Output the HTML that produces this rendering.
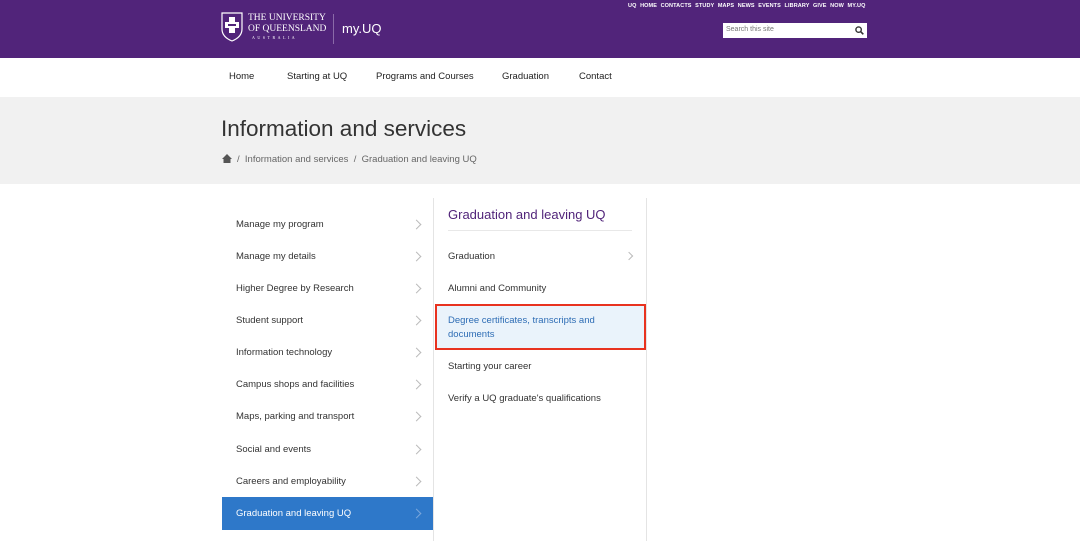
<!DOCTYPE html>
<html><head><meta charset="utf-8"><style>
*{margin:0;padding:0;box-sizing:border-box}
body{width:1080px;height:541px;overflow:hidden;background:#fff;font-family:"Liberation Sans",Arial,sans-serif;position:relative}
.hdr{position:absolute;left:0;top:0;width:1080px;height:58px;background:#51247a}
.top{position:absolute;top:3px;left:628px;font-size:5.5px;color:#fff;font-weight:bold;letter-spacing:0.1px;white-space:nowrap;word-spacing:2px}
.search{position:absolute;left:723px;top:23px;width:144px;height:15px;background:#fff;font-size:7px;color:#777;padding:3px 3px}
.nav{position:absolute;top:71px;font-size:9.5px;color:#222}
.band{position:absolute;top:97px;left:0;width:1080px;height:87px;background:#f1f1f1}
.t{position:absolute;left:221px;top:116px;font-size:22.5px;color:#333}
.bc{position:absolute;left:246px;top:154px;font-size:9.5px;color:#666;white-space:nowrap}
.li{position:absolute;left:222px;width:211px;height:32px;font-size:9.5px;color:#333;padding:11px 14px}
.li .c{position:absolute;right:13px;top:13px;width:7px;height:7px;border-right:1px solid #bbb;border-top:1px solid #bbb;transform:rotate(45deg)}
.act{background:#2e78c9;color:#fff}
.act .c{border-color:#7aa6db}
.col{position:absolute;left:433px;top:198px;width:214px;height:343px;border-left:1px solid #e4e4e4;border-right:1px solid #e4e4e4}
.ri{position:absolute;left:448px;font-size:9.5px;color:#333}
</style></head><body>
<div class="hdr">
<svg style="position:absolute;left:221px;top:12px" width="22" height="30" viewBox="0 0 22 30"><path d="M1 1H21V17Q21 25 11 29Q1 25 1 17Z" fill="none" stroke="#fff" stroke-width="1.2"/><path d="M8 5H14V10H18V16H14V21H8V16H4V10H8Z" fill="#fff"/><rect x="7" y="12" width="8" height="2" fill="#51247a"/></svg>
<div style="position:absolute;left:248px;top:13px;color:#fff;font-family:'Liberation Serif',serif;font-size:9.5px;line-height:11px;white-space:nowrap">THE UNIVERSITY<br>OF QUEENSLAND<div style="font-size:4px;letter-spacing:2.5px;line-height:6px;margin-left:4px">AUSTRALIA</div></div>
<div style="position:absolute;left:333px;top:14px;width:1px;height:30px;background:#8a6aa8"></div>
<div style="position:absolute;left:342px;top:21px;color:#fff;font-size:13px">my.UQ</div>
<div class="top">UQ HOME CONTACTS STUDY MAPS NEWS EVENTS LIBRARY GIVE NOW MY.UQ</div>
<div class="search">Search this site<svg style="position:absolute;right:3px;top:3px" width="9" height="9" viewBox="0 0 9 9"><circle cx="3.6" cy="3.6" r="2.7" fill="none" stroke="#333" stroke-width="1.4"/><path d="M5.6 5.6L8.3 8.3" stroke="#333" stroke-width="1.6"/></svg></div>
</div>
<div class="nav" style="left:229px">Home</div>
<div class="nav" style="left:287px">Starting at UQ</div>
<div class="nav" style="left:376px">Programs and Courses</div>
<div class="nav" style="left:502px">Graduation</div>
<div class="nav" style="left:579px">Contact</div>
<div class="band"></div>
<div class="t">Information and services</div>
<svg style="position:absolute;left:222px;top:154px" width="10" height="9" viewBox="0 0 10 9"><path d="M0 5L5 0L10 5H8.5V9H1.5V5Z" fill="#555"/></svg>
<div class="bc" style="left:237px">/ &nbsp;Information and services &nbsp;/ &nbsp;Graduation and leaving UQ</div>
<div class="li" style="top:208px">Manage my program<span class="c"></span></div>
<div class="li" style="top:240px">Manage my details<span class="c"></span></div>
<div class="li" style="top:272px">Higher Degree by Research<span class="c"></span></div>
<div class="li" style="top:304px">Student support<span class="c"></span></div>
<div class="li" style="top:336px">Information technology<span class="c"></span></div>
<div class="li" style="top:368px">Campus shops and facilities<span class="c"></span></div>
<div class="li" style="top:400px">Maps, parking and transport<span class="c"></span></div>
<div class="li" style="top:433px">Social and events<span class="c"></span></div>
<div class="li" style="top:465px">Careers and employability<span class="c"></span></div>
<div class="li act" style="top:497px;height:33px;padding-top:11px">Graduation and leaving UQ<span class="c"></span></div>
<div class="col"></div>
<div style="position:absolute;left:448px;top:207px;font-size:13px;color:#51247a">Graduation and leaving UQ</div>
<div style="position:absolute;left:448px;top:230px;width:184px;height:1px;background:#e8e8e8"></div>
<div class="ri" style="top:251px">Graduation</div>
<div style="position:absolute;left:626px;top:253px;width:6px;height:6px;border-right:1px solid #bbb;border-top:1px solid #bbb;transform:rotate(45deg)"></div>
<div class="ri" style="top:283px">Alumni and Community</div>
<div style="position:absolute;left:435px;top:304px;width:211px;height:46px;background:#eaf3fb;border:2px solid #e8321f"></div>
<div class="ri" style="top:314px;color:#2e6db5;line-height:14px">Degree certificates, transcripts and<br>documents</div>
<div class="ri" style="top:361px">Starting your career</div>
<div class="ri" style="top:393px">Verify a UQ graduate's qualifications</div>
</body></html>
